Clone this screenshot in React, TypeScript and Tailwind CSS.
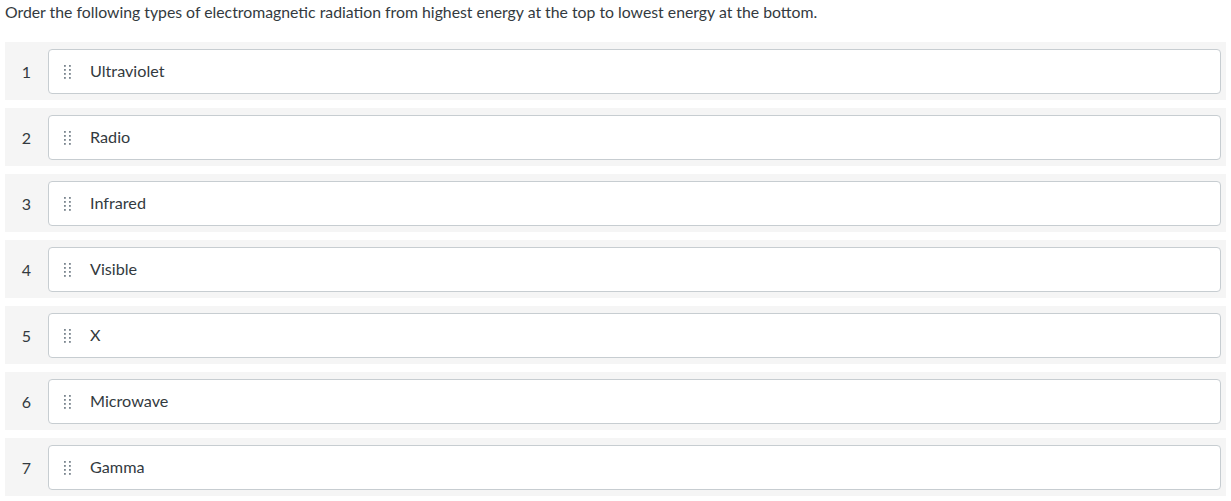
const ITEMS = [
  "Ultraviolet",
  "Radio",
  "Infrared",
  "Visible",
  "X",
  "Microwave",
  "Gamma",
];

function DragHandle() {
  return (
    <svg width="9" height="16" viewBox="0 0 9 16" className="shrink-0" aria-hidden="true">
      {[0, 1, 2, 3].map((r) =>
        [0, 1].map((c) => (
          <rect
            key={`${r}-${c}`}
            x={1 + c * 5}
            y={1 + r * 4}
            width="1.8"
            height="1.8"
            fill="#7a858e"
          />
        )),
      )}
    </svg>
  );
}

export default function App() {
  return (
    <div
      className="bg-white text-[#333a40]"
      style={{ fontFamily: "Lato, 'Open Sans', sans-serif" }}
    >
      <p className="px-[5px] pt-[2px] text-[15.8px] leading-[20px]">
        Order the following types of electromagnetic radiation from highest energy at the top to lowest energy at the bottom.
      </p>
      <ol className="mt-[20px] flex flex-col gap-[8px] pl-[5px] pr-[5px]">
        {ITEMS.map((item, i) => (
          <li
            key={item}
            className="flex h-[58px] items-start bg-[#f5f5f5] pt-[7px] pr-[5px]"
          >
            <span className="flex h-[45px] w-[43px] shrink-0 items-center justify-center text-[16px]">
              {i + 1}
            </span>
            <div className="flex h-[45px] flex-1 items-center rounded-[4px] border border-[#c7cdd1] bg-white pl-[14px]">
              <DragHandle />
              <span className="ml-[18px] text-[16.2px]">{item}</span>
            </div>
          </li>
        ))}
      </ol>
    </div>
  );
}
